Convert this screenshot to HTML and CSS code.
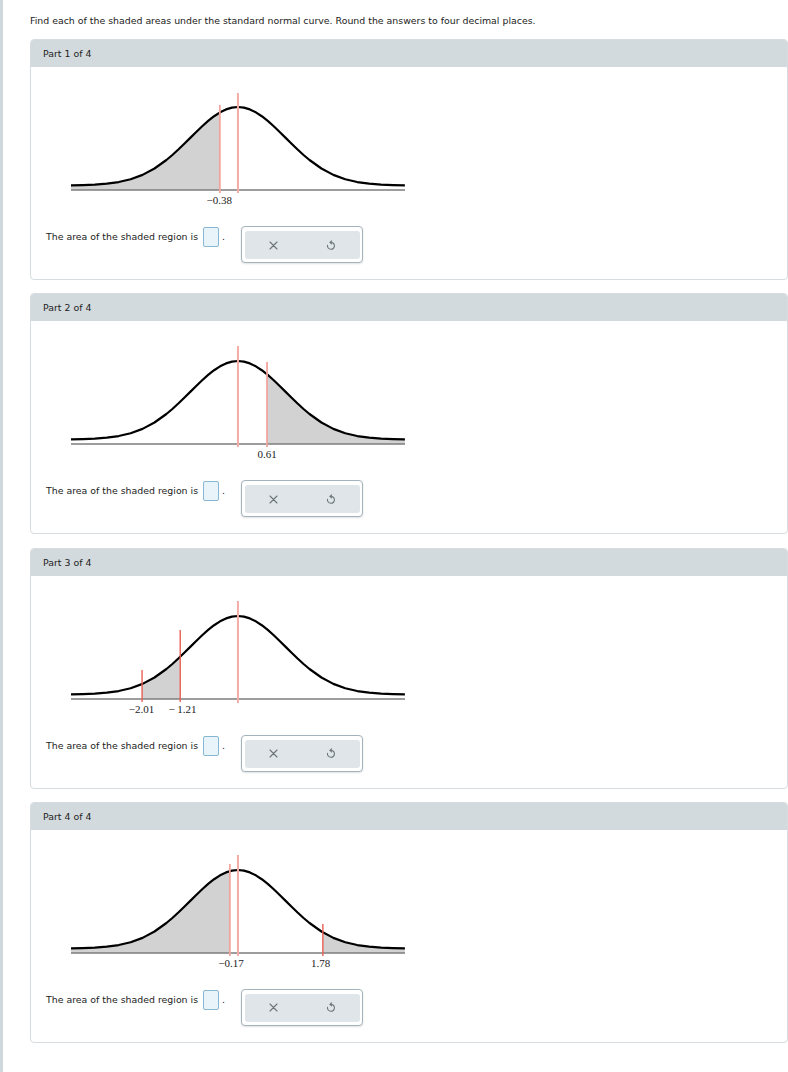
FILE: index.html
```html
<!DOCTYPE html>
<html>
<head>
<meta charset="utf-8">
<link rel="stylesheet" href="styles.css">
</head>
<body>
<div class="page">
  <p class="prompt">Find each of the shaded areas under the standard normal curve. Round the answers to four decimal places.</p>

  <section class="part">
    <div class="part-head">Part 1 of 4</div>
    <div class="part-body">
      <svg class="graph" width="340" height="120" viewBox="0 0 340 120">
        <defs>
          <polyline id="curve" points="0,95.33 11.93,95.10 23.85,94.63 35.78,93.71 47.7,92.05 59.63,89.25 71.55,84.88 83.48,78.52 95.4,70.01 101.36,65 107.33,59.56 113.29,53.81 119.25,47.89 125.21,41.97 131.18,36.25 137.14,30.93 143.1,26.22 149.06,22.33 155.03,19.42 160.99,17.61 166.95,17 172.91,17.61 178.88,19.42 184.84,22.33 190.8,26.22 196.76,30.93 202.73,36.25 208.69,41.97 214.65,47.89 220.61,53.81 226.58,59.56 232.54,65 238.5,70.01 250.43,78.52 262.35,84.88 274.28,89.25 286.2,92.05 298.13,93.71 310.05,94.63 321.98,95.1 333.9,95.33"/>
          <polygon id="area" points="0,100 0,95.33 11.93,95.10 23.85,94.63 35.78,93.71 47.7,92.05 59.63,89.25 71.55,84.88 83.48,78.52 95.4,70.01 101.36,65 107.33,59.56 113.29,53.81 119.25,47.89 125.21,41.97 131.18,36.25 137.14,30.93 143.1,26.22 149.06,22.33 155.03,19.42 160.99,17.61 166.95,17 172.91,17.61 178.88,19.42 184.84,22.33 190.8,26.22 196.76,30.93 202.73,36.25 208.69,41.97 214.65,47.89 220.61,53.81 226.58,59.56 232.54,65 238.5,70.01 250.43,78.52 262.35,84.88 274.28,89.25 286.2,92.05 298.13,93.71 310.05,94.63 321.98,95.1 333.9,95.33 333.9,100"/>
          <clipPath id="clip1"><rect x="0" y="0" width="148.82" height="110"/></clipPath>
          <clipPath id="clip2"><rect x="196.05" y="0" width="140" height="110"/></clipPath>
          <clipPath id="clip3"><rect x="71.07" y="0" width="38.16" height="110"/></clipPath>
          <clipPath id="clip4"><rect x="0" y="0" width="158.84" height="110"/><rect x="251.86" y="0" width="90" height="110"/></clipPath>
        </defs>
        <use href="#area" class="shade" clip-path="url(#clip1)"/>
        <line class="axis" x1="0" y1="100" x2="334" y2="100"/>
        <use href="#curve" class="curve"/>
        <line class="mean" x1="166.95" y1="3" x2="166.95" y2="103"/>
        <line class="mark soft" x1="148.82" y1="15" x2="148.82" y2="103"/>
        <text class="tick" x="148.3" y="114">−0.38</text>
      </svg>
      <div class="answer-row">
        <div class="answer-line">
          <span class="answer-text">The area of the shaded region is</span>
          <span class="answer-box"></span>
          <span class="period">.</span>
        </div>
        <div class="btn-group">
          <div class="btn-inner">
            <span class="tool-btn"><svg width="9" height="9" viewBox="0 0 9 9"><path d="M1 1 L8 8 M8 1 L1 8"/></svg></span>
            <span class="tool-btn"><svg width="10" height="11" viewBox="0 0 10 11"><path d="M4.2 2.4 A3.5 3.5 0 1 1 1.5 5.2"/><path d="M5.6 0.9 L4 2.4 L5.6 3.9"/></svg></span>
          </div>
        </div>
      </div>
    </div>
  </section>

  <section class="part">
    <div class="part-head">Part 2 of 4</div>
    <div class="part-body">
      <svg class="graph" width="340" height="120" viewBox="0 0 340 120">
        <use href="#area" class="shade" clip-path="url(#clip2)"/>
        <line class="axis" x1="0" y1="100" x2="334" y2="100"/>
        <use href="#curve" class="curve"/>
        <line class="mean" x1="166.95" y1="2" x2="166.95" y2="103"/>
        <line class="mark soft" x1="196.05" y1="18" x2="196.05" y2="103"/>
        <text class="tick" x="196" y="114">0.61</text>
      </svg>
      <div class="answer-row">
        <div class="answer-line">
          <span class="answer-text">The area of the shaded region is</span>
          <span class="answer-box"></span>
          <span class="period">.</span>
        </div>
        <div class="btn-group">
          <div class="btn-inner">
            <span class="tool-btn"><svg width="9" height="9" viewBox="0 0 9 9"><path d="M1 1 L8 8 M8 1 L1 8"/></svg></span>
            <span class="tool-btn"><svg width="10" height="11" viewBox="0 0 10 11"><path d="M4.2 2.4 A3.5 3.5 0 1 1 1.5 5.2"/><path d="M5.6 0.9 L4 2.4 L5.6 3.9"/></svg></span>
          </div>
        </div>
      </div>
    </div>
  </section>

  <section class="part">
    <div class="part-head">Part 3 of 4</div>
    <div class="part-body">
      <svg class="graph" width="340" height="120" viewBox="0 0 340 120">
        <use href="#area" class="shade" clip-path="url(#clip3)"/>
        <line class="axis" x1="0" y1="100" x2="334" y2="100"/>
        <use href="#curve" class="curve"/>
        <line class="mean" x1="166.95" y1="2" x2="166.95" y2="104"/>
        <line class="mark" x1="71.07" y1="71" x2="71.07" y2="103"/>
        <line class="mark" x1="109.23" y1="31" x2="109.23" y2="103"/>
        <text class="tick" x="70.5" y="114">−2.01</text>
        <text class="tick" x="111.5" y="114">− 1.21</text>
      </svg>
      <div class="answer-row">
        <div class="answer-line">
          <span class="answer-text">The area of the shaded region is</span>
          <span class="answer-box"></span>
          <span class="period">.</span>
        </div>
        <div class="btn-group">
          <div class="btn-inner">
            <span class="tool-btn"><svg width="9" height="9" viewBox="0 0 9 9"><path d="M1 1 L8 8 M8 1 L1 8"/></svg></span>
            <span class="tool-btn"><svg width="10" height="11" viewBox="0 0 10 11"><path d="M4.2 2.4 A3.5 3.5 0 1 1 1.5 5.2"/><path d="M5.6 0.9 L4 2.4 L5.6 3.9"/></svg></span>
          </div>
        </div>
      </div>
    </div>
  </section>

  <section class="part">
    <div class="part-head">Part 4 of 4</div>
    <div class="part-body">
      <svg class="graph" width="340" height="120" viewBox="0 0 340 120">
        <use href="#area" class="shade" clip-path="url(#clip4)"/>
        <line class="axis" x1="0" y1="100" x2="334" y2="100"/>
        <use href="#curve" class="curve"/>
        <line class="mean" x1="166.95" y1="2" x2="166.95" y2="103"/>
        <line class="mark soft" x1="158.84" y1="11" x2="158.84" y2="103"/>
        <line class="mark" x1="251.86" y1="71" x2="251.86" y2="103"/>
        <text class="tick" x="160" y="114">−0.17</text>
        <text class="tick" x="249.7" y="114">1.78</text>
      </svg>
      <div class="answer-row">
        <div class="answer-line">
          <span class="answer-text">The area of the shaded region is</span>
          <span class="answer-box"></span>
          <span class="period">.</span>
        </div>
        <div class="btn-group">
          <div class="btn-inner">
            <span class="tool-btn"><svg width="9" height="9" viewBox="0 0 9 9"><path d="M1 1 L8 8 M8 1 L1 8"/></svg></span>
            <span class="tool-btn"><svg width="10" height="11" viewBox="0 0 10 11"><path d="M4.2 2.4 A3.5 3.5 0 1 1 1.5 5.2"/><path d="M5.6 0.9 L4 2.4 L5.6 3.9"/></svg></span>
          </div>
        </div>
      </div>
    </div>
  </section>
</div>
</body>
</html>
```

FILE: styles.css
```css
html, body {
  margin: 0;
  padding: 0;
  background: #ffffff;
}

body {
  font-family: "DejaVu Sans", Verdana, sans-serif;
  font-size: 9.4px;
  color: #222222;
}

.page {
  min-height: 1072px;
  box-sizing: border-box;
  border-left: 3px solid #cdd7dc;
  padding: 13px 0 0 27px;
}

.prompt {
  margin: 0 0 11px 0;
  line-height: 15px;
}

.part {
  border: 1px solid #d6dcdf;
  border-radius: 4px;
  margin-bottom: 13.33px;
  overflow: hidden;
}

.part-head {
  background: #d3dadd;
  height: 28px;
  line-height: 27px;
  padding-left: 13px;
  margin: -1px -1px 0 -1px;
  border-radius: 4px 4px 0 0;
  padding-top: 1px;
  box-sizing: border-box;
}

.part-body {
  padding: 23px 0 16px 15px;
}

.graph {
  display: block;
  margin-left: 25px;
  overflow: visible;
}

.shade {
  fill: #d2d2d2;
}

.axis {
  stroke: #7d7d7d;
  stroke-width: 1.3;
}

.curve {
  fill: none;
  stroke: #000000;
  stroke-width: 2.2;
  stroke-linejoin: round;
}

.mean {
  stroke: #f5aca7;
  stroke-width: 2;
}

.mark {
  stroke: #ea5f53;
  stroke-width: 1.4;
}

.mark.soft {
  stroke: #f2a49e;
  stroke-width: 1.8;
}

.tick {
  font-family: "Liberation Serif", "Times New Roman", serif;
  font-size: 11px;
  text-anchor: middle;
  fill: #222222;
}

.answer-row {
  display: flex;
  align-items: flex-start;
  margin-top: 16px;
}

.answer-line {
  display: flex;
  align-items: center;
  height: 20px;
  margin-top: 1px;
}

.answer-text {
  line-height: 20px;
}

.answer-box {
  width: 16px;
  height: 20px;
  box-sizing: border-box;
  margin-left: 5px;
  border: 1px solid #86b7d3;
  border-radius: 2px;
  background: #e9f4fa;
}

.period {
  margin-left: 3px;
  line-height: 20px;
}

.btn-group {
  margin-left: 16px;
  width: 122px;
  height: 37px;
  box-sizing: border-box;
  border: 1px solid #a3b3bb;
  border-radius: 4px;
  background: #ffffff;
  padding: 4px 2px 3px 3px;
  box-shadow: 0 1px 2px rgba(0, 0, 0, 0.12);
}

.btn-inner {
  display: flex;
  height: 28px;
  background: #dfe5e8;
  border-radius: 3px;
}

.tool-btn {
  flex: 1;
  display: flex;
  align-items: center;
  justify-content: center;
}

.tool-btn svg {
  fill: none;
  stroke: #6b757a;
  stroke-width: 1.1;
  stroke-linecap: round;
  stroke-linejoin: round;
}
```
